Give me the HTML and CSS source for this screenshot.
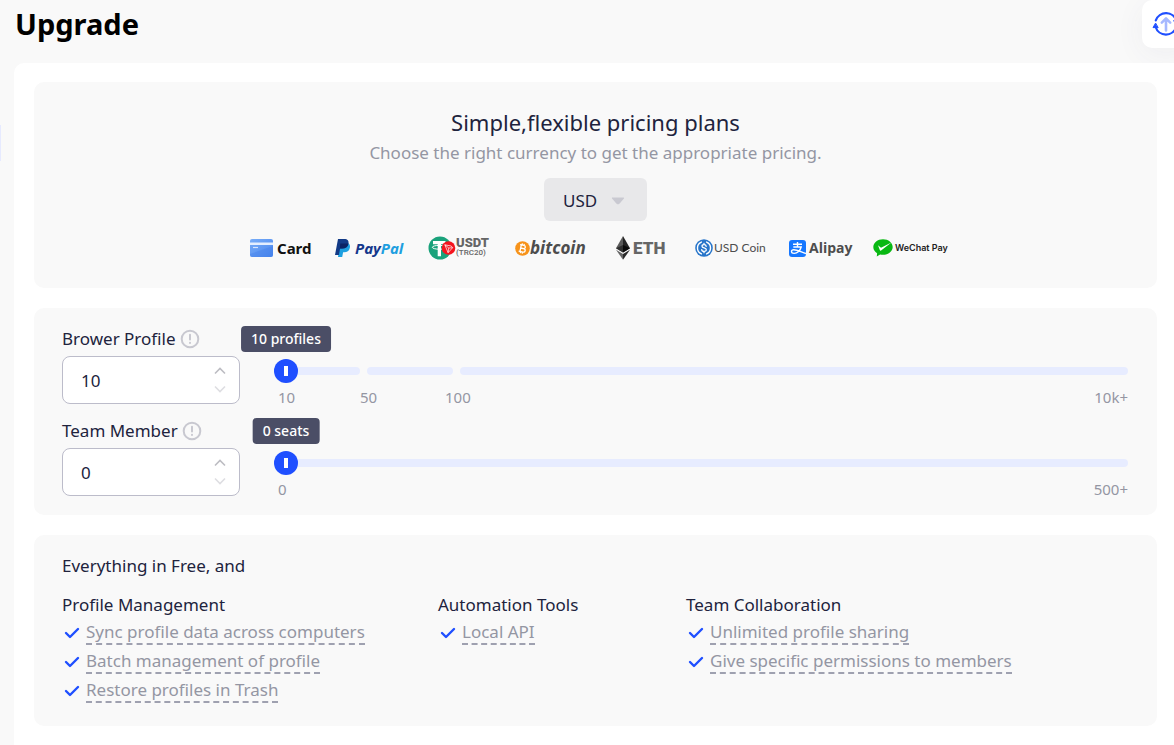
FILE: index.html
```html
<!DOCTYPE html>
<html lang="en">
<head>
<meta charset="utf-8">
<meta name="viewport" content="width=device-width, initial-scale=1">
<title>Upgrade</title>
<link rel="stylesheet" href="styles.css">
</head>
<body>
<div class="rail-marker"></div>
<header class="topbar">
  <h1 class="page-title">Upgrade</h1>
  <button class="sync-button" type="button" aria-label="Sync">
    <svg width="28" height="28" viewBox="0 0 28 28" fill="none" stroke-linecap="round" stroke-linejoin="round">
      <path d="M3.800 10.400A10.800 10.800 0 0 1 24.400 11" stroke="#1f4fff" stroke-width="2.200"/>
      <path d="M24.200 17A10.800 10.800 0 0 1 3.600 17" stroke="#1f4fff" stroke-width="2.200"/>
      <path d="M3.400 13.400 1 17.600h4.800z" fill="#1f4fff" stroke="#1f4fff" stroke-width="1"/>
      <path d="M24.600 14.400l2.400-3.800h-5z" fill="#1f4fff" stroke="#1f4fff" stroke-width="1"/>
      <path d="M14 20.500V9M9.800 12.600 14 8.400l4.200 4.200" stroke="#a5b8ff" stroke-width="2.600"/>
    </svg>
  </button>
</header>
<main class="panel">
  <section class="card intro">
    <h2 class="intro-title">Simple,flexible pricing plans</h2>
    <p class="intro-text">Choose the right currency to get the appropriate pricing.</p>
    <div class="currency">
      <select class="currency-select" aria-label="Currency"><option>USD</option></select>
      <svg class="currency-arrow" width="14" height="8" viewBox="0 0 14 8"><path d="M1.500 1h11L8.200 6.200q-1.200 1.200-2.400 0z" fill="#c9c9d1" stroke="#c9c9d1" stroke-width="1.200" stroke-linejoin="round"/></svg>
    </div>
    <ul class="payments">
      <li class="pay pay-card">
        <svg width="23" height="18" viewBox="0 0 23 18"><defs><linearGradient id="cg" x2="1" y2="1"><stop stop-color="#78adf8"/><stop offset="1" stop-color="#4a87ee"/></linearGradient></defs><rect width="23" height="18" rx="2" fill="url(#cg)"/><path d="M0 15 23 7v9a2 2 0 0 1-2 2H2a2 2 0 0 1-2-2z" fill="#3f7be8" opacity=".35"/><path d="M0 3.500h23v2.500H0z" fill="#e4efff"/><path d="M3 8.500h5" stroke="#d3e4ff" stroke-width="1.200"/></svg>
        <span>Card</span>
      </li>
      <li class="pay pay-paypal">
        <svg width="16" height="18" viewBox="0 0 16 18"><path d="M5.200 4h7.200c2.400.8 3 2.600 2.400 5-.7 3-2.700 4.200-5.600 4.200H8.100L7.200 18H3z" fill="#1ea0e0"/><path d="M3 0h6.200c3.400 0 4.900 1.800 4.200 5-.7 3.200-2.900 4.600-6.200 4.600H5.100L3.900 16H0z" fill="#123a86"/><path d="M5.300 4.500h8.200c-.6 3.500-2.800 5.100-6.300 5.100H4.800z" fill="#0b2364"/></svg>
        <span class="paypal-dark">Pay<span class="paypal-light">Pal</span></span>
      </li>
      <li class="pay pay-usdt">
        <svg width="28" height="24" viewBox="0 0 28 24"><circle cx="12" cy="12" r="11.500" fill="#1aa27b"/><path d="M5 5h12.500v3.200H13v12H9.700v-12H5z" fill="#fff"/><ellipse cx="11.300" cy="11.300" rx="7" ry="1.900" fill="none" stroke="#fff" stroke-width="1"/><circle cx="20.500" cy="12" r="6.800" fill="#f5141e"/><path d="M16.800 8.800l6.400 1.200 1.400 1.700-4.500 5zM16.800 8.800l4 3.200M20.800 12l3.800-.3M20.800 12l-.7 4.500" fill="none" stroke="#fff" stroke-width=".7"/></svg>
        <span class="usdt-text"><span>USDT</span><span class="usdt-net">(TRC20)</span></span>
      </li>
      <li class="pay pay-bitcoin">
        <svg width="15" height="15" viewBox="0 0 15 15"><circle cx="7.500" cy="7.500" r="7.300" fill="#f7931a"/><g transform="rotate(12 7.500 7.500)" fill="none" stroke="#fff" stroke-width="1.300"><path d="M4.300 4.200h4c2.300 0 2.300 3.200 0 3.200H5.600h3c2.600 0 2.600 3.500 0 3.500H4.300M5.600 4v7M6.400 2.600v1.600M8.300 2.600v1.600M6.400 10.900v1.600M8.300 10.900v1.600"/></g></svg>
        <span>bitcoin</span>
      </li>
      <li class="pay pay-eth">
        <svg width="16" height="24" viewBox="0 0 16 24"><path d="M8 0v16.500L1 12.300z" fill="#5a5a5a"/><path d="M8 0v16.500l7-4.200z" fill="#252525"/><path d="M8 9v7.500l-7-4.200z" fill="#303030"/><path d="M8 9v7.500l7-4.200z" fill="#0b0b0b"/><path d="M1 13.800 8 18v5.800z" fill="#666"/><path d="M15 13.800 8 18v5.800z" fill="#292929"/></svg>
        <span>ETH</span>
      </li>
      <li class="pay pay-usdc">
        <svg width="18" height="18" viewBox="0 0 18 18" fill="none" stroke="#fff" stroke-linecap="round"><circle cx="9" cy="9" r="8.800" fill="#2775ca" stroke="none"/><path d="M6.400 3.100a6.400 6.400 0 0 0 0 11.800M11.600 3.100a6.400 6.400 0 0 1 0 11.800" stroke-width="1.400"/><path d="M11.200 7.300c-.3-2.400-4.200-2.200-4.200-.1 0 2.300 4.300 1.200 4.300 3.600 0 2.200-4.400 2.200-4.600-.2M9 4.300v1.300M9 12.400v1.300" stroke-width="1.300"/></svg>
        <span>USD Coin</span>
      </li>
      <li class="pay pay-alipay">
        <svg width="17" height="17" viewBox="0 0 17 17"><rect width="17" height="17" rx="3" fill="#1677ff"/><path d="M4 4.300h9M8.500 2v5M4.300 7h7.900c-.9 3.300-3.800 6.400-7 6.400-3.600 0-3.500-3.700-.4-3.700 3 0 6.900 2 12.200 3.800" fill="none" stroke="#fff" stroke-width="1.400"/></svg>
        <span>Alipay</span>
      </li>
      <li class="pay pay-wechat">
        <svg width="20" height="18" viewBox="0 0 20 18"><path d="M10 .3c5.400 0 9.700 3.400 9.700 7.700s-4.300 7.800-9.700 7.800c-1 0-2-.1-2.900-.4L3.800 17.600l.3-3.300C1.800 12.900.3 10.600.3 8 .3 3.700 4.600.3 10 .3z" fill="#09b813"/><path d="M5 6.200 8 8.700 18.400 3.400 8.100 11.500c-.5.400-.9.300-1.200-.2z" fill="#fff"/></svg>
        <span>WeChat Pay</span>
      </li>
    </ul>
  </section>

  <section class="card limits">
    <div class="limit">
      <div class="field">
        <div class="field-head">
          <label for="profiles">Brower Profile</label>
          <svg class="hint" width="20" height="20" viewBox="0 0 20 20" fill="none" stroke="#c8c8d0" stroke-width="2" stroke-linecap="round"><circle cx="10" cy="10" r="8.300"/><path d="M10 5.800v4.600M10 13.700v.2"/></svg>
        </div>
        <div class="stepper">
          <input class="stepper-input" id="profiles" type="number" value="10">
          <div class="stepper-buttons">
            <button class="step" type="button" aria-label="More profiles"><svg width="12" height="8" viewBox="0 0 12 8"><path d="M1 6.500 6 1.500l5 5"/></svg></button>
            <button class="step step-off" type="button" aria-label="Fewer profiles"><svg width="12" height="8" viewBox="0 0 12 8"><path d="M1 1.500l5 5 5-5"/></svg></button>
          </div>
        </div>
      </div>
      <div class="range">
        <output class="bubble" for="profiles-range">10 profiles</output>
        <div class="slider">
          <div class="track track-split"><span></span><span></span><span></span></div>
          <input class="slider-input" id="profiles-range" type="range" min="10" max="10000" value="10" aria-label="Brower Profile">
        </div>
        <div class="marks marks-split"><span>10</span><span>50</span><span class="marks-ends"><span>100</span><span>10k+</span></span></div>
      </div>
    </div>
    <div class="limit">
      <div class="field">
        <div class="field-head">
          <label for="members">Team Member</label>
          <svg class="hint" width="20" height="20" viewBox="0 0 20 20" fill="none" stroke="#c8c8d0" stroke-width="2" stroke-linecap="round"><circle cx="10" cy="10" r="8.300"/><path d="M10 5.800v4.600M10 13.700v.2"/></svg>
        </div>
        <div class="stepper">
          <input class="stepper-input" id="members" type="number" value="0">
          <div class="stepper-buttons">
            <button class="step" type="button" aria-label="More members"><svg width="12" height="8" viewBox="0 0 12 8"><path d="M1 6.500 6 1.500l5 5"/></svg></button>
            <button class="step step-off" type="button" aria-label="Fewer members"><svg width="12" height="8" viewBox="0 0 12 8"><path d="M1 1.500l5 5 5-5"/></svg></button>
          </div>
        </div>
      </div>
      <div class="range">
        <output class="bubble" for="members-range">0 seats</output>
        <div class="slider">
          <div class="track"><span></span></div>
          <input class="slider-input" id="members-range" type="range" min="0" max="500" value="0" aria-label="Team Member">
        </div>
        <div class="marks marks-ends"><span>0</span><span>500+</span></div>
      </div>
    </div>
  </section>

  <section class="card features">
    <h2 class="features-title">Everything in Free, and</h2>
    <div class="feature-columns">
      <div>
        <h3 class="feature-heading">Profile Management</h3>
        <ul class="feature-list">
          <li><svg class="check" width="16" height="12" viewBox="0 0 16 12"><path d="M2 6l4 4 8-8"/></svg><a href="#sync">Sync profile data across computers</a></li>
          <li><svg class="check" width="16" height="12" viewBox="0 0 16 12"><path d="M2 6l4 4 8-8"/></svg><a href="#batch">Batch management of profile</a></li>
          <li><svg class="check" width="16" height="12" viewBox="0 0 16 12"><path d="M2 6l4 4 8-8"/></svg><a href="#restore">Restore profiles in Trash</a></li>
        </ul>
      </div>
      <div>
        <h3 class="feature-heading">Automation Tools</h3>
        <ul class="feature-list">
          <li><svg class="check" width="16" height="12" viewBox="0 0 16 12"><path d="M2 6l4 4 8-8"/></svg><a href="#api">Local API</a></li>
        </ul>
      </div>
      <div>
        <h3 class="feature-heading">Team Collaboration</h3>
        <ul class="feature-list">
          <li><svg class="check" width="16" height="12" viewBox="0 0 16 12"><path d="M2 6l4 4 8-8"/></svg><a href="#sharing">Unlimited profile sharing</a></li>
          <li><svg class="check" width="16" height="12" viewBox="0 0 16 12"><path d="M2 6l4 4 8-8"/></svg><a href="#permissions">Give specific permissions to members</a></li>
        </ul>
      </div>
    </div>
  </section>
</main>
</body>
</html>
```

FILE: styles.css
```css
* {
  box-sizing: border-box;
}

body {
  margin: 0;
  min-height: 100vh;
  display: flex;
  flex-direction: column;
  overflow-x: hidden;
  background: #f9f9f9;
  color: #21233d;
  font: 17px/24px "Noto Sans", "Open Sans", sans-serif;
}

h1, h2, h3, p, ul {
  margin: 0;
  padding: 0;
  font-weight: 400;
}

ul {
  list-style: none;
}

button {
  border: 0;
  padding: 0;
  background: none;
  font: inherit;
}

svg {
  display: block;
  flex: none;
}

/* Edge of the highlighted side menu item */
.rail-marker {
  position: absolute;
  left: 0;
  top: 125px;
  width: 1px;
  height: 36px;
  background: #e6eaff;
}

.topbar {
  display: flex;
  justify-content: space-between;
  height: 63px;
  padding-left: 15px;
  overflow: hidden;
}

.page-title {
  color: #000;
  font-size: 29px;
  font-weight: 700;
  line-height: 48px;
}

.sync-button {
  display: flex;
  align-items: center;
  justify-content: center;
  width: 48px;
  height: 48px;
  margin-right: -16px;
  border-radius: 10px;
  background: #fff;
  box-shadow: 0 6px 30px rgba(60, 70, 120, 0.06);
}

.panel {
  flex: 1;
  display: flex;
  flex-direction: column;
  gap: 20px;
  margin-left: 14px;
  padding: 19px 17px 19px 20px;
  border-radius: 10px 0 0 0;
  background: #fff;
}

.card {
  border-radius: 10px;
  background: #f9f9f9;
}

.intro {
  display: flex;
  flex-direction: column;
  align-items: center;
  padding: 24px 28px 24px;
}

.intro-title {
  font-size: 22px;
  line-height: 32px;
}

.intro-text {
  color: #9496a3;
  line-height: 30px;
}

.currency {
  display: grid;
  align-items: center;
  margin: 10px 0 11px;
}

.currency-select {
  grid-area: 1 / 1;
  width: 103px;
  height: 43px;
  padding: 2px 40px 0 19px;
  appearance: none;
  border: 0;
  border-radius: 6px;
  background: #e8e8ea;
  color: inherit;
  font: inherit;
}

.currency-arrow {
  grid-area: 1 / 1;
  justify-self: end;
  margin: 2px 22px 0 0;
  pointer-events: none;
}

.payments {
  display: flex;
  gap: 24px;
  height: 32px;
  padding-left: 6px;
}

.pay {
  display: flex;
  align-items: center;
  gap: 4px;
  color: #4d4d4d;
  font-size: 15px;
  font-weight: 700;
  line-height: 16px;
  white-space: nowrap;
}

.pay-card {
  width: 61px;
  color: #111;
}

.pay-paypal {
  width: 69px;
  font-style: italic;
}

.paypal-dark {
  color: #14388c;
}

.paypal-light {
  color: #1e9fe0;
}

.pay-usdt {
  width: 63px;
  gap: 0;
  color: #666;
  font-family: Roboto, sans-serif;
  font-size: 13px;
  font-weight: 900;
}

.usdt-text {
  display: flex;
  flex-direction: column;
  line-height: 10px;
}

.usdt-net {
  font-size: 8px;
  font-weight: 500;
}

.pay-bitcoin {
  width: 70px;
  gap: 0;
  font-size: 17px;
  font-style: italic;
}

.pay-eth {
  width: 62px;
  gap: 2px;
  padding-left: 6px;
  color: #666;
  font-family: Roboto, sans-serif;
  font-size: 17px;
  font-weight: 900;
}

.pay-usdc {
  width: 70px;
  gap: 1px;
  font-family: Lato, sans-serif;
  font-size: 12px;
  font-weight: 400;
}

.pay-alipay {
  width: 60px;
  gap: 3px;
  font-family: "Open Sans", sans-serif;
  font-size: 14px;
}

.pay-wechat {
  width: 74px;
  gap: 2px;
  color: #222;
  font-family: Inter, sans-serif;
  font-size: 9px;
  font-weight: 600;
}

.limits {
  display: flex;
  flex-direction: column;
  gap: 14px;
  padding: 19px 29px 18px 28px;
}

.limit {
  display: flex;
  gap: 34px;
}

.field {
  display: flex;
  flex-direction: column;
  gap: 5px;
  width: 178px;
}

.field-head {
  display: flex;
  align-items: center;
  gap: 4px;
}

.stepper {
  display: flex;
  height: 48px;
  padding: 0 13px 0 18px;
  border: 1px solid #bcbcca;
  border-radius: 8px;
  background: #fff;
}

.stepper-input {
  flex: 1;
  min-width: 0;
  padding: 1px 0 0;
  appearance: textfield;
  border: 0;
  outline: 0;
  background: none;
  color: inherit;
  font: inherit;
}

.stepper-input::-webkit-inner-spin-button {
  display: none;
}

.stepper-buttons {
  display: flex;
  flex-direction: column;
  justify-content: center;
  gap: 10px;
}

.step path {
  fill: none;
  stroke: #bdbdc3;
  stroke-width: 1.6;
}

.step-off path {
  stroke: #dedee2;
}

.range {
  position: relative;
  flex: 1;
  padding-top: 32px;
}

.bubble {
  position: absolute;
  left: 12px;
  top: -1px;
  padding: 1px 10px;
  transform: translateX(-50%);
  border-radius: 4px;
  background: #4b4e66;
  color: #fff;
  font-size: 14px;
  font-weight: 500;
  white-space: nowrap;
}

.slider {
  display: grid;
  align-items: center;
}

.track {
  grid-area: 1 / 1;
  display: grid;
  gap: 7px;
}

.track-split {
  grid-template-columns: 86fr 86fr 668fr;
}

.track span {
  height: 8px;
  border-radius: 4px;
  background: #e7ecff;
}

.slider-input {
  grid-area: 1 / 1;
  width: 100%;
  height: 24px;
  margin: 0;
  appearance: none;
  background: none;
}

.slider-input::-webkit-slider-thumb {
  appearance: none;
  width: 24px;
  height: 24px;
  border-radius: 50%;
  background: linear-gradient(#fff, #fff) center / 4px 10px no-repeat #1f4fff;
}

.marks {
  margin-top: 6px;
  padding-left: 4px;
  color: #9496a3;
  font-size: 15px;
  line-height: 16px;
}

.marks-split {
  display: grid;
  grid-template-columns: 82fr 85fr 683fr;
}

.marks-ends {
  display: flex;
  justify-content: space-between;
}

.features {
  padding: 19px 28px 20px;
}

.features-title {
  margin-bottom: 15px;
  font-size: 17px;
}

.feature-columns {
  display: grid;
  grid-template-columns: 376fr 248fr 443fr;
}

.feature-heading {
  margin-bottom: 2px;
  font-size: 17px;
}

.feature-list li {
  display: flex;
  align-items: center;
  gap: 6px;
  padding: 2px 0 3px 2px;
}

.feature-list a {
  border-bottom: 2px dashed #9fa1b0;
  color: #9496a3;
  text-decoration: none;
  line-height: 22px;
}

.check {
  fill: none;
  stroke: #1f4fff;
  stroke-width: 2.4;
  stroke-linecap: round;
  stroke-linejoin: round;
}
```
